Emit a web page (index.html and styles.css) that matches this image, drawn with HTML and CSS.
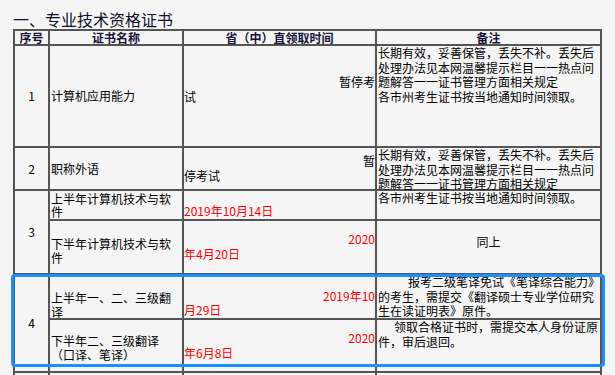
FILE: index.html
```html
<!DOCTYPE html>
<html lang="zh-CN">
<head>
<meta charset="utf-8">
<title>专业技术资格证书</title>
<link rel="stylesheet" href="styles.css">
</head>
<body>
<div class="page">
  <h2 class="title">一、专业技术资格证书</h2>
  <div class="sheet">
    <table class="cert">
      <thead>
        <tr class="row-head">
          <th class="col-no">序号</th>
          <th class="col-name">证书名称</th>
          <th class="col-date">省（中）直领取时间</th>
          <th class="col-note">备注</th>
        </tr>
      </thead>
      <tbody>
        <tr class="row-1">
          <td class="no">1</td>
          <td class="name">计算机应用能力</td>
          <td class="date lift-13"><div class="date-r">暂停考</div><div>试</div></td>
          <td class="note">长期有效，妥善保管，丢失不补。丢失后<br>处理办法见本网温馨提示栏目一一热点问<br>题解答一一证书管理方面相关规定<br>各市州考生证书按当地通知时间领取。</td>
        </tr>
        <tr class="row-2">
          <td class="no">2</td>
          <td class="name">职称外语</td>
          <td class="date"><div class="date-r">暂</div><div>停考试</div></td>
          <td class="note"><div class="fit-41">长期有效，妥善保管，丢失不补。丢失后<br>处理办法见本网温馨提示栏目一一热点问<br>题解答一一证书管理方面相关规定</div></td>
        </tr>
        <tr class="row-3a">
          <td class="no" rowspan="2">3</td>
          <td class="name">上半年计算机技术与软<br>件</td>
          <td class="date at-bottom"><div class="red">2019年10月14日</div></td>
          <td class="note">各市州考生证书按当地通知时间领取。</td>
        </tr>
        <tr class="row-3b">
          <td class="name drop-7">下半年计算机技术与软<br>件</td>
          <td class="date"><div class="date-r red">2020</div><div class="red">年4月20日</div></td>
          <td class="note same">同上</td>
        </tr>
        <tr class="row-4a">
          <td class="no" rowspan="2">4</td>
          <td class="name drop-16">上半年一、二、三级翻<br>译</td>
          <td class="date at-bottom"><div class="date-r red">2019年10</div><div class="red">月29日</div></td>
          <td class="note"><div class="fit-43 indent-30">报考二级笔译免试《笔译综合能力》<br>的考生，需提交《翻译硕士专业学位研究<br>生在读证明表》原件。</div></td>
        </tr>
        <tr class="row-4b">
          <td class="name drop-4">下半年二、三级翻译<br>（口译、笔译）</td>
          <td class="date"><div class="date-r red">2020</div><div class="red">年6月8日</div></td>
          <td class="note"><div class="indent-16">领取合格证书时，需提交本人身份证原<br>件，审后退回。</div></td>
        </tr>
        <tr class="row-5"><td></td><td></td><td></td><td></td></tr>
      </tbody>
    </table>
    <div class="highlight"></div>
  </div>
</div>
</body>
</html>
```

FILE: styles.css
```css
html, body {
  margin: 0;
  padding: 0;
  background: #f5f5f5;
}

body {
  font-family: "Noto Sans CJK SC", "Noto Sans", sans-serif;
  font-size: 12px;
  color: #000;
}

.page {
  padding: 9px 0 0 13px;
}

.title {
  margin: 0;
  height: 20px;
  font-size: 16px;
  line-height: 20px;
  font-weight: normal;
  color: #10102a;
  white-space: nowrap;
}

.sheet {
  position: relative;
  width: 589px;
}

.cert {
  width: 589px;
  table-layout: fixed;
  border-collapse: separate;
  border-spacing: 0;
  border-top: 2px solid #555;
  border-left: 2px solid #555;
}

.cert th,
.cert td {
  box-sizing: border-box;
  border-right: 2px solid #555;
  border-bottom: 2px solid #555;
  padding: 0 1px;
  vertical-align: middle;
  white-space: nowrap;
  overflow: visible;
}

.cert th {
  font-weight: bold;
  text-align: center;
  line-height: 13px;
  color: #14143a;
}

.col-no { width: 35px; }
.col-name { width: 134px; }
.col-date { width: 193px; }
.col-note { width: 225px; }

.row-head { height: 15px; }
.row-1 { height: 102px; }
.row-2 { height: 43px; }
.row-3a { height: 30px; }
.row-3b { height: 54px; }
.row-4a { height: 45px; }
.row-4b { height: 53px; }
.row-5 { height: 30px; }

.cert td.no {
  text-align: center;
  line-height: 14px;
}

.cert td.name {
  text-align: left;
  line-height: 13.5px;
}

.cert td.drop-4 { padding-top: 4px; }
.cert td.drop-7 { padding-top: 7px; }
.cert td.drop-16 { padding-top: 16px; }

.cert td.date {
  padding: 0;
  line-height: 14.6px;
}

.cert td.lift-13 { padding-bottom: 13px; }

.cert td.at-bottom { vertical-align: bottom; }

.date-r { text-align: right; }

.red { color: #ff0000; }

.cert td.note {
  vertical-align: top;
  line-height: 14.6px;
}

.cert td.same {
  vertical-align: middle;
  text-align: center;
  padding-bottom: 10px;
}

.fit-41 { height: 41px; }
.fit-43 { height: 43px; }

.indent-30 { text-indent: 30px; }
.indent-16 { text-indent: 16px; }

.highlight {
  position: absolute;
  left: -2px;
  top: 245px;
  width: 594px;
  height: 93px;
  box-sizing: border-box;
  border: 3px solid #1890ff;
  border-radius: 4px;
  pointer-events: none;
}
```
